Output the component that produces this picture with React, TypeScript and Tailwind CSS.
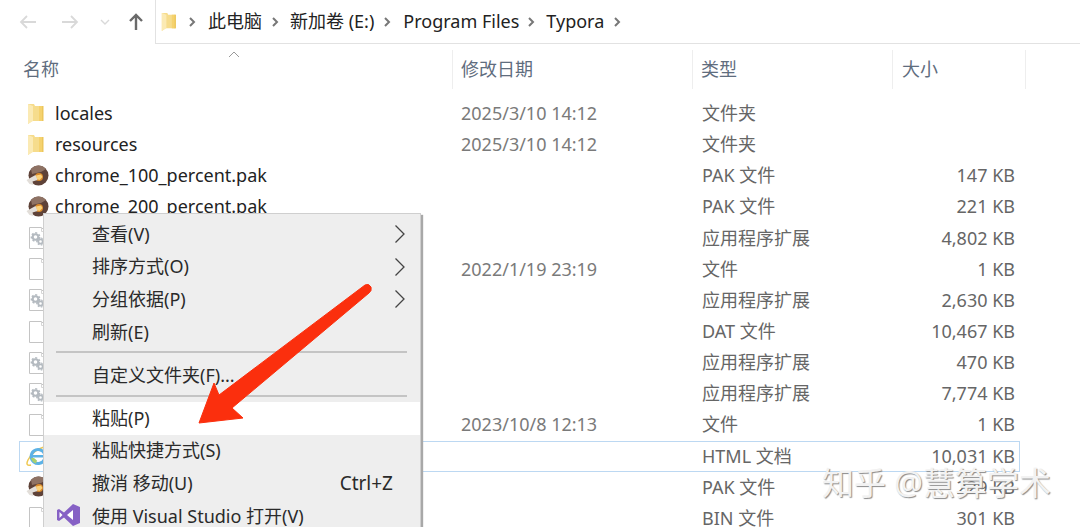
const font = "font-['Noto_Sans','Noto_Sans_CJK_SC',sans-serif]";

type Icon = 'folder' | 'pak' | 'gear' | 'file' | 'ie';

const rows: { name: string; date: string; type: string; size: string; icon: Icon; selected?: boolean }[] = [
  { name: 'locales', date: '2025/3/10 14:12', type: '文件夹', size: '', icon: 'folder' },
  { name: 'resources', date: '2025/3/10 14:12', type: '文件夹', size: '', icon: 'folder' },
  { name: 'chrome_100_percent.pak', date: '', type: 'PAK 文件', size: '147 KB', icon: 'pak' },
  { name: 'chrome_200_percent.pak', date: '', type: 'PAK 文件', size: '221 KB', icon: 'pak' },
  { name: '', date: '', type: '应用程序扩展', size: '4,802 KB', icon: 'gear' },
  { name: '', date: '2022/1/19 23:19', type: '文件', size: '1 KB', icon: 'file' },
  { name: '', date: '', type: '应用程序扩展', size: '2,630 KB', icon: 'gear' },
  { name: '', date: '', type: 'DAT 文件', size: '10,467 KB', icon: 'file' },
  { name: '', date: '', type: '应用程序扩展', size: '470 KB', icon: 'gear' },
  { name: '', date: '', type: '应用程序扩展', size: '7,774 KB', icon: 'gear' },
  { name: '', date: '2023/10/8 12:13', type: '文件', size: '1 KB', icon: 'file' },
  { name: '', date: '', type: 'HTML 文档', size: '10,031 KB', icon: 'ie', selected: true },
  { name: '', date: '', type: 'PAK 文件', size: '229 KB', icon: 'pak' },
  { name: '', date: '', type: 'BIN 文件', size: '301 KB', icon: 'file' },
];

function FolderIcon({ size = 22 }: { size?: number }) {
  return (
    <svg width={size} height={size} viewBox="0 0 22 22">
      <path d="M2 1h6l1 2h8v15H6l-4 3z" fill="#f6dc8c" />
      <path d="M2 1l5 2v15l-5 3z" fill="#fbeab4" />
      <path d="M13 3h4v15h-4z" fill="#f5d26e" />
      <path d="M16 3h1.500v15H16z" fill="#ecc65c" />
    </svg>
  );
}

function PakIcon() {
  return (
    <svg width="24" height="24" viewBox="0 0 24 24">
      <circle cx="12.500" cy="11.500" r="10" fill="#5e4238" />
      <path d="M5 5a10 10 0 0 1 15 0l-5 3-9 2z" fill="#8e7264" />
      <circle cx="13" cy="13" r="4" fill="#d98a2c" />
      <path d="M10 11.500l5-1 1.500 2.500-3 3-3-1z" fill="#fbd27a" />
      <path d="M0.500 16l9-5 2 5-5 1.500 1 3.500-4-1z" fill="#e2ded9" />
    </svg>
  );
}

function FileIcon({ gear }: { gear?: boolean }) {
  return (
    <svg width="24" height="24" viewBox="0 0 24 24">
      <path d="M3.500 1.500h12l4 4v17h-16z" fill="#fff" stroke="#c4c4c4" />
      <path d="M15.500 1.500v4h4" fill="none" stroke="#d6d6d6" />
      {gear && (
        <g fill="none" stroke="#b4bac0">
          <circle cx="9.500" cy="11" r="2.800" strokeWidth="2" />
          <circle cx="9.500" cy="11" r="4.200" strokeWidth="1.400" strokeDasharray="2 1.800" />
          <circle cx="14.500" cy="15.500" r="2.200" strokeWidth="1.800" />
          <circle cx="14.500" cy="15.500" r="3.500" strokeWidth="1.200" strokeDasharray="1.800 1.500" />
        </g>
      )}
    </svg>
  );
}

function IeIcon() {
  return (
    <svg width="24" height="24" viewBox="0 0 24 24">
      <path d="M5 21c-4 1-5-1-3-5 3-6 9-11 16-13 3-1 4 1 2 4" fill="none" stroke="#efc852" strokeWidth="1.500" />
      <path d="M18.500 15.500A7 7 0 1 1 18.500 9.500" fill="none" stroke="#5cb2e6" strokeWidth="3" />
      <path d="M6 11h13v2.500H6z" fill="#5cb2e6" />
      <path d="M5 14a7 7 0 0 0 5 5.500l1-3-3-2.500z" fill="#a8d070" />
    </svg>
  );
}

function RowIcon({ icon }: { icon: Icon }) {
  if (icon === 'folder') return <FolderIcon />;
  if (icon === 'pak') return <PakIcon />;
  if (icon === 'ie') return <IeIcon />;
  return <FileIcon gear={icon === 'gear'} />;
}

function Chevron({ className }: { className: string }) {
  return (
    <svg width="9" height="12" viewBox="0 0 9 12" className={className}>
      <path d="M2 2l4 4-4 4" fill="none" stroke="currentColor" strokeWidth="2" />
    </svg>
  );
}

function Toolbar() {
  return (
    <div className="flex h-[44px] items-center">
      <div className="flex w-[155px] items-center pl-[19px] text-[#d9d9d9]">
        <svg width="18" height="14" viewBox="0 0 18 14">
          <path d="M17 7H2M8 1L2 7l6 6" fill="none" stroke="currentColor" strokeWidth="1.800" />
        </svg>
        <svg width="18" height="14" viewBox="0 0 18 14" className="ml-[24px]">
          <path d="M1 7h15M10 1l6 6-6 6" fill="none" stroke="currentColor" strokeWidth="1.800" />
        </svg>
        <svg width="10" height="7" viewBox="0 0 10 7" className="ml-[21px]">
          <path d="M1 1l4 4 4-4" fill="none" stroke="currentColor" strokeWidth="1.400" />
        </svg>
        <svg width="16" height="18" viewBox="0 0 16 18" className="ml-[18px] text-[#6a6a6a]">
          <path d="M8 17V3M2 8l6-6 6 6" fill="none" stroke="currentColor" strokeWidth="2.400" />
        </svg>
      </div>
      <div className="flex h-full flex-1 items-center border-b border-l border-[#e2e2e2] pl-[4px] text-[18px] text-[#222]">
        <FolderIcon size={20} />
        <Chevron className="ml-[8px] text-[#777]" />
        <span className="ml-[11px]">此电脑</span>
        <Chevron className="ml-[9px] text-[#777]" />
        <span className="ml-[10px]">新加卷 (E:)</span>
        <Chevron className="ml-[9px] text-[#777]" />
        <span className="ml-[11px]">Program Files</span>
        <Chevron className="ml-[8px] text-[#777]" />
        <span className="ml-[10px]">Typora</span>
        <Chevron className="ml-[9px] text-[#777]" />
      </div>
    </div>
  );
}

function Header() {
  return (
    <div className="relative flex h-[54px] items-start pt-[6px] text-[18px] text-[#5f6d7e]">
      <div className="flex h-[39px] w-[452px] items-center pl-[23px]">名称</div>
      <div className="flex h-[39px] w-[240px] items-center border-l border-[#eeeeee] pl-[8px]">修改日期</div>
      <div className="flex h-[39px] w-[200px] items-center border-l border-[#eeeeee] pl-[8px]">类型</div>
      <div className="flex h-[39px] w-[134px] items-center border-x border-[#eeeeee] pl-[9px]">大小</div>
      <svg width="12" height="7" viewBox="0 0 12 7" className="absolute left-[228px] top-[7px] text-[#9a9a9a]">
        <path d="M1 6l5-5 5 5" fill="none" stroke="currentColor" />
      </svg>
    </div>
  );
}

function FileRow({ row }: { row: (typeof rows)[number] }) {
  return (
    <div
      className={`ml-[19px] flex h-[31.15px] w-[1001px] items-center border text-[18px] ${
        row.selected ? 'border-[#bcd8f2]' : 'border-transparent'
      }`}
    >
      <div className="flex w-[432px] items-center pl-[6px]">
        <div className="w-[24px]">
          <RowIcon icon={row.icon} />
        </div>
        <span className="ml-[5px] whitespace-nowrap text-[#222]">{row.name}</span>
      </div>
      <div className="w-[250px] pl-[9px] text-[#7a7a7a]">{row.date}</div>
      <div className="w-[218px] text-[#666]">{row.type}</div>
      <div className="w-[95px] text-right text-[#666]">{row.size}</div>
    </div>
  );
}

const menuItems = [
  { label: '查看(V)', sub: true },
  { label: '排序方式(O)', sub: true },
  { label: '分组依据(P)', sub: true },
  { label: '刷新(E)' },
  { sep: true, tall: true },
  { label: '自定义文件夹(F)...' },
  { sep: true },
  { label: '粘贴(P)', hover: true },
  { label: '粘贴快捷方式(S)' },
  { label: '撤消 移动(U)', shortcut: 'Ctrl+Z' },
  { label: '使用 Visual Studio 打开(V)', vs: true },
];

function ContextMenu() {
  return (
    <div className="absolute left-[43px] top-[213px] h-[330px] w-[378px] border border-[#cfcfcf] bg-[#eeeeee] pt-[4px] text-[18px] text-[#2a2a2a] shadow-[2px_2px_1px_#a8a8a8]">
      {menuItems.map((item, i) =>
        item.sep ? (
          <div key={i} className={`flex items-start pl-[12px] pr-[13px] pt-[3px] ${item.tall ? 'h-[11px]' : 'h-[10px]'}`}>
            <div className="h-[2px] w-full bg-[#c4c4c4]" />
          </div>
        ) : (
          <div key={i} className={`relative flex h-[32.6px] items-center pl-[48px] pr-[27px] ${item.hover ? 'bg-white' : ''}`}>
            {item.vs && (
              <svg width="24" height="24" viewBox="0 0 24 24" className="absolute left-[13px] top-[3px]">
                <path d="M16 1l7 3v16l-7 3-9-8.500L2 18l-2-1V7l2-1 5 3.500z" fill="#8661c5" />
                <path d="M16 7v10l-6-5z" fill="#fff" />
                <path d="M2.500 9v6l3-3z" fill="#fff" />
              </svg>
            )}
            <span>{item.label}</span>
            {item.shortcut && <span className="ml-auto text-[19px]">{item.shortcut}</span>}
            {item.sub && (
              <svg width="12" height="20" viewBox="0 0 12 20" className="absolute right-[14px] top-[6px] text-[#444]">
                <path d="M1.500 1.500L10 10l-8.500 8.500" fill="none" stroke="currentColor" strokeWidth="1.300" />
              </svg>
            )}
          </div>
        ),
      )}
    </div>
  );
}

function Arrow() {
  return (
    <svg width="1080" height="527" viewBox="0 0 1080 527" className="pointer-events-none absolute left-0 top-0">
      <path
        d="M199 423L214 383L219 395L365 285Q369 283 371 287Q372 291 369 293L232 408L243 418Z"
        fill="#fb2f0d"
        stroke="#fb2f0d"
        strokeLinejoin="round"
      />
    </svg>
  );
}

export default function App() {
  return (
    <div className={`relative h-[527px] w-[1080px] overflow-hidden bg-white ${font}`}>
      <Toolbar />
      <Header />
      {rows.map((row, i) => (
        <FileRow key={i} row={row} />
      ))}
      <ContextMenu />
      <Arrow />
      <div className="absolute left-[822px] top-[461px] whitespace-nowrap text-[32px] leading-[44px] text-[#f2f2f2] [text-shadow:1px_1px_1px_#8a8a8a]">
        知乎 @慧算学术
      </div>
    </div>
  );
}
